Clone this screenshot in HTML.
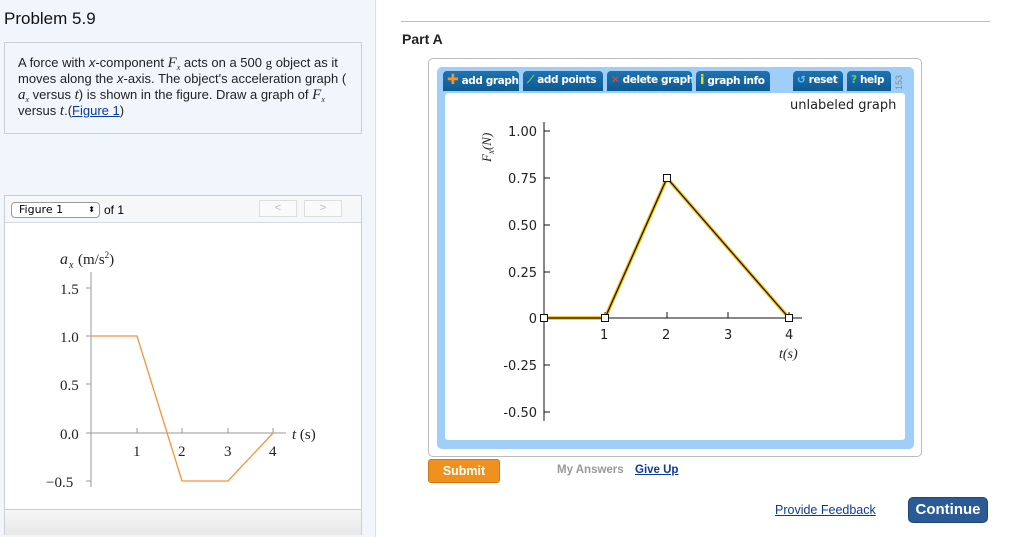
<!DOCTYPE html>
<html><head><meta charset="utf-8"><style>
*{margin:0;padding:0;box-sizing:border-box}
body{width:1011px;height:537px;overflow:hidden;background:#fff;font-family:"Liberation Sans",Arial,sans-serif;position:relative}
.abs{position:absolute}
#left{left:0;top:0;width:376px;height:537px;background:#f1f6fd;border-right:1px solid #d8e2ee}
.btn{position:absolute;top:71px;height:20px;background:linear-gradient(#1f73b0,#0c5a94);color:#fff;font-size:10.5px;font-weight:bold;line-height:19px;border-radius:4px 4px 0 0;padding-left:4px;font-family:"DejaVu Sans",sans-serif;letter-spacing:-0.4px;white-space:nowrap;overflow:hidden}
.a{color:#0b3a9e;text-decoration:underline}
.m{font-family:'Liberation Serif',serif;font-style:italic;font-size:15px;line-height:10px;display:inline-block}
.m s{text-decoration:none;font-size:8px;position:relative;top:3px}
</style></head><body>
<div id="left" class="abs">
<div class="abs" style="left:4px;top:9px;font-size:17px;color:#111">Problem 5.9</div>
<div class="abs" style="left:4px;top:42px;width:358px;height:92px;border:1px solid #c6cfdb;background:#f1f6fd"></div>
<div class="abs" style="left:18px;top:55px;font-size:13px;line-height:16px;color:#222;white-space:nowrap">A force with <i>x</i>-component <span class="m">F<s>x</s></span> acts on a 500 <span style="font-family:'Liberation Serif',serif">g</span> object as it<br>moves along the <i>x</i>-axis. The object's acceleration graph (<br><span class="m">a<s>x</s></span> versus <span class="m">t</span>) is shown in the figure. Draw a graph of <span class="m">F<s>x</s></span><br>versus <span class="m">t</span>.(<span class="a">Figure 1</span>)</div>
<div class="abs" style="left:4px;top:195px;width:358px;height:340px;border:1px solid #c6cfdb;background:#fff"></div>
<div class="abs" style="left:5px;top:196px;width:356px;height:27px;background:#f6f7f9;border-bottom:1px solid #d6dbe2"></div>
<div class="abs" style="left:11px;top:202px;width:89px;height:16px;border:1px solid #999;border-radius:4px;background:#fff;font-size:11px;line-height:14px;padding-left:7px;font-family:'DejaVu Sans',sans-serif">Figure 1<span style="position:absolute;right:4px;font-size:8px">⬍</span></div>
<div class="abs" style="left:104px;top:203px;font-size:12px">of 1</div>
<div class="abs" style="left:259px;top:200px;width:38px;height:17px;border:1px solid #ddd;background:#fafafa;color:#bbb;font-size:11px;text-align:center;line-height:15px">&lt;</div>
<div class="abs" style="left:304px;top:200px;width:38px;height:17px;border:1px solid #ddd;background:#fafafa;color:#bbb;font-size:11px;text-align:center;line-height:15px">&gt;</div>
<div class="abs" style="left:5px;top:509px;width:356px;height:26px;background:linear-gradient(#f6f6f6,#e8e8e8);border-top:1px solid #ccc"></div>
<svg class="abs" style="left:0;top:0" width="376" height="537" font-family="Liberation Serif,serif" font-size="15" fill="#222">
<text x="60" y="264" font-style="italic" font-size="16">a</text><text x="69" y="268" font-style="italic" font-size="10">x</text><text x="78" y="264">(m/s<tspan font-size="9" dy="-6">2</tspan><tspan dy="6">)</tspan></text>
<g stroke="#999" stroke-width="1"><line x1="91" y1="272" x2="91" y2="487"/><line x1="91" y1="433" x2="286" y2="433"/>
<line x1="86" y1="288" x2="91" y2="288"/><line x1="86" y1="336" x2="91" y2="336"/><line x1="86" y1="384" x2="91" y2="384"/><line x1="86" y1="433" x2="91" y2="433"/><line x1="86" y1="481" x2="91" y2="481"/>
<line x1="137" y1="428" x2="137" y2="433"/><line x1="182" y1="428" x2="182" y2="433"/><line x1="228" y1="428" x2="228" y2="433"/><line x1="273" y1="428" x2="273" y2="433"/></g>
<text x="60" y="294">1.5</text><text x="60" y="342">1.0</text><text x="60" y="390">0.5</text><text x="60" y="439">0.0</text><text x="46" y="487">−0.5</text>
<text x="133" y="456">1</text><text x="178" y="456">2</text><text x="224" y="456">3</text><text x="269" y="456">4</text>
<text x="292" y="439"><tspan font-style="italic">t</tspan> (s)</text>
<polyline points="91,336 137,336 182,481 228,481 273,433" fill="none" stroke="#f7923a" stroke-width="1.3"/>
</svg>
</div>
<div class="abs" style="left:401px;top:21px;width:589px;height:1px;background:#bbb"></div>
<div class="abs" style="left:402px;top:31px;font-size:14px;font-weight:bold;color:#222">Part A</div>
<div class="abs" style="left:428px;top:58px;width:494px;height:399px;border:1px solid #bbb;border-radius:5px"></div>
<div class="abs" style="left:437px;top:67px;width:477px;height:382px;background:#9fcff8;border-radius:5px"></div>
<div class="abs" style="left:445px;top:93px;width:460px;height:347px;background:#fff;border-radius:3px"></div>
<div class="btn" style="left:443px;width:76px"><span style="color:#f7941d;font-size:14px">✚</span> add graph</div>
<div class="btn" style="left:523px;width:80px"><span style="color:#7cd13c">⟋</span> add points</div>
<div class="btn" style="left:607px;width:85px"><span style="color:#f04a2a">✕</span> delete graph</div>
<div class="btn" style="left:696px;width:74px"><span style="color:#f5e400;font-size:13px">i</span> graph info</div>
<div class="btn" style="left:793px;width:50px"><span style="color:#5bc3ff">↺</span> reset</div>
<div class="btn" style="left:847px;width:44px"><span style="color:#5cd84a">?</span> help</div>
<div class="abs" style="left:894px;top:90px;font-size:9px;color:#888;transform:rotate(-90deg);transform-origin:0 0">153</div>
<div class="abs" style="left:790px;top:98px;font-size:13px;color:#222;font-family:'DejaVu Sans',sans-serif">unlabeled graph</div>
<svg class="abs" style="left:445px;top:93px" width="460" height="347" font-family="DejaVu Sans,sans-serif" font-size="13" fill="#222">
<g transform="translate(-445,-93)">
<text transform="translate(491,162) rotate(-90)" font-family="Liberation Serif,serif" font-style="italic" font-size="13">F<tspan font-size="9" dy="3">x</tspan><tspan dy="-3">(N)</tspan></text>
<g stroke="#111" stroke-width="1"><line x1="544" y1="122" x2="544" y2="421"/><line x1="544" y1="318" x2="802" y2="318"/>
<line x1="544" y1="131" x2="550" y2="131"/><line x1="544" y1="178" x2="550" y2="178"/><line x1="544" y1="225" x2="550" y2="225"/><line x1="544" y1="272" x2="550" y2="272"/><line x1="544" y1="365" x2="550" y2="365"/><line x1="544" y1="412" x2="550" y2="412"/>
<line x1="605" y1="312" x2="605" y2="318"/><line x1="667" y1="312" x2="667" y2="318"/><line x1="728" y1="312" x2="728" y2="318"/><line x1="789" y1="312" x2="789" y2="318"/></g>
<g text-anchor="end"><text x="537" y="136">1.00</text><text x="537" y="183">0.75</text><text x="537" y="230">0.50</text><text x="537" y="277">0.25</text><text x="537" y="323">0</text><text x="537" y="370">-0.25</text><text x="537" y="417">-0.50</text></g>
<text x="600" y="339">1</text><text x="662" y="339">2</text><text x="724" y="339">3</text><text x="785" y="339">4</text>
<text x="779" y="358" font-family="Liberation Serif,serif" font-style="italic" font-size="14">t(s)</text>
<polyline points="544,318 605,318 667,178 789,318" fill="none" stroke="#f5b800" stroke-width="3.5"/>
<polyline points="544,318 605,318 667,178 789,318" fill="none" stroke="#111" stroke-width="1.2"/>
<g fill="#fff" stroke="#111" stroke-width="1"><rect x="540.5" y="314.5" width="7" height="7"/><rect x="601.5" y="314.5" width="7" height="7"/><rect x="663.5" y="174.5" width="7" height="7"/><rect x="785.5" y="314.5" width="7" height="7"/></g>
</g></svg>
<div class="abs" style="left:428px;top:459px;width:72px;height:24px;background:#f0901f;border:1px solid #d07a10;border-radius:3px;color:#fff;font-weight:bold;font-size:12.5px;text-align:center;line-height:22px">Submit</div>
<div class="abs" style="left:557px;top:464px;font-size:11.5px;font-weight:bold;color:#999">My Answers</div>
<div class="abs a" style="left:635px;top:464px;font-size:11.5px;font-weight:bold">Give Up</div>
<div class="abs a" style="left:775px;top:503px;font-size:12.5px">Provide Feedback</div>
<div class="abs" style="left:908px;top:497px;width:80px;height:26px;background:#2b5b94;border:1px solid #1e4677;border-radius:5px;color:#fff;font-size:15px;font-weight:bold;text-align:center;line-height:24px">Continue</div>
</body></html>
